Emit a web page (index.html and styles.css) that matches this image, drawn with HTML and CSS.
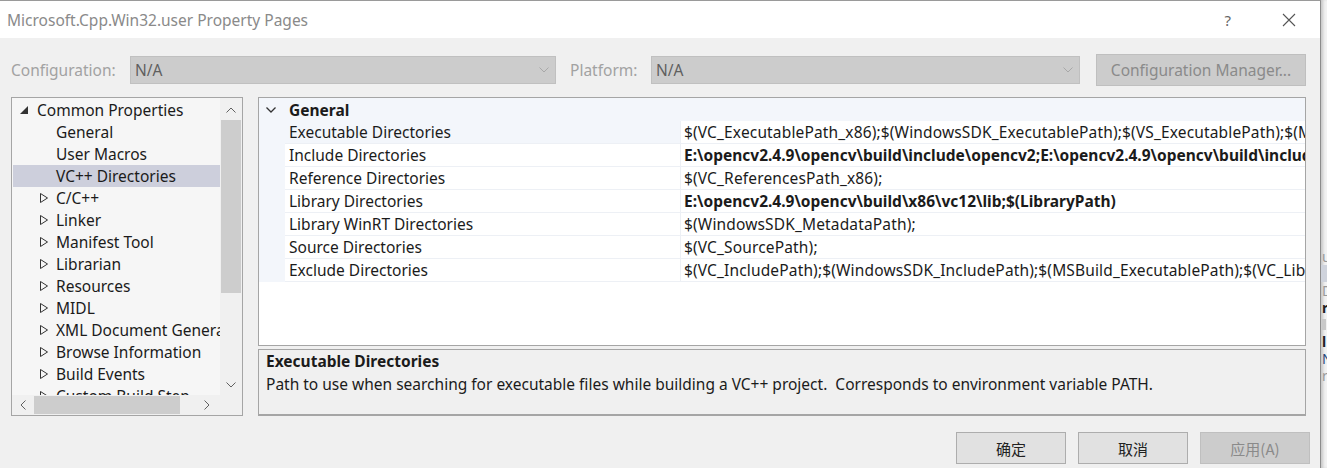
FILE: index.html
```html
<!DOCTYPE html>
<html lang="en">
<head>
    <meta charset="UTF-8">
    <title>Microsoft.Cpp.Win32.user Property Pages</title>
    <link rel="stylesheet" href="styles.css">
</head>
<body>
<div class="desktop">
    <div class="window">

        <!-- Title bar -->
        <div class="titlebar">
            <div class="title">Microsoft.Cpp.Win32.user Property Pages</div>
            <div class="title-buttons">
                <span class="help">?</span>
                <svg class="close" width="14" height="14" viewBox="0 0 14 14"><path d="M1 1 L13 13 M13 1 L1 13" stroke="#555" stroke-width="1.1" fill="none"/></svg>
            </div>
        </div>

        <!-- Configuration row -->
        <div class="config-row">
            <label class="config-label first">Configuration:</label>
            <div class="combo wide1">
                <span>N/A</span>
                <svg width="10" height="6" viewBox="0 0 10 6"><path d="M0.5 0.5 L5 5 L9.5 0.5" stroke="#a8a8a8" fill="none"/></svg>
            </div>
            <label class="config-label second">Platform:</label>
            <div class="combo wide2">
                <span>N/A</span>
                <svg width="10" height="6" viewBox="0 0 10 6"><path d="M0.5 0.5 L5 5 L9.5 0.5" stroke="#a8a8a8" fill="none"/></svg>
            </div>
            <div class="config-manager">Configuration Manager...</div>
        </div>

        <!-- Main area -->
        <div class="main">
            <!-- Tree -->
            <div class="tree">
                <div class="tree-top">
                    <div class="tree-items">
                        <div class="tree-item root">
                            <svg class="tri" width="8" height="8" viewBox="0 0 8 8"><path d="M8 0 L8 8 L0 8 Z" fill="#333"/></svg>
                            <span>Common Properties</span>
                        </div>
                        <div class="tree-item leaf">General</div>
                        <div class="tree-item leaf">User Macros</div>
                        <div class="tree-item leaf selected">VC++ Directories</div>
                        <div class="tree-item child"><svg class="tri" width="8" height="10" viewBox="0 0 8 10"><path d="M0.5 0.5 L7.5 5 L0.5 9.5 Z" fill="none" stroke="#333"/></svg><span>C/C++</span></div>
                        <div class="tree-item child"><svg class="tri" width="8" height="10" viewBox="0 0 8 10"><path d="M0.5 0.5 L7.5 5 L0.5 9.5 Z" fill="none" stroke="#333"/></svg><span>Linker</span></div>
                        <div class="tree-item child"><svg class="tri" width="8" height="10" viewBox="0 0 8 10"><path d="M0.5 0.5 L7.5 5 L0.5 9.5 Z" fill="none" stroke="#333"/></svg><span>Manifest Tool</span></div>
                        <div class="tree-item child"><svg class="tri" width="8" height="10" viewBox="0 0 8 10"><path d="M0.5 0.5 L7.5 5 L0.5 9.5 Z" fill="none" stroke="#333"/></svg><span>Librarian</span></div>
                        <div class="tree-item child"><svg class="tri" width="8" height="10" viewBox="0 0 8 10"><path d="M0.5 0.5 L7.5 5 L0.5 9.5 Z" fill="none" stroke="#333"/></svg><span>Resources</span></div>
                        <div class="tree-item child"><svg class="tri" width="8" height="10" viewBox="0 0 8 10"><path d="M0.5 0.5 L7.5 5 L0.5 9.5 Z" fill="none" stroke="#333"/></svg><span>MIDL</span></div>
                        <div class="tree-item child"><svg class="tri" width="8" height="10" viewBox="0 0 8 10"><path d="M0.5 0.5 L7.5 5 L0.5 9.5 Z" fill="none" stroke="#333"/></svg><span>XML Document Generator</span></div>
                        <div class="tree-item child"><svg class="tri" width="8" height="10" viewBox="0 0 8 10"><path d="M0.5 0.5 L7.5 5 L0.5 9.5 Z" fill="none" stroke="#333"/></svg><span>Browse Information</span></div>
                        <div class="tree-item child"><svg class="tri" width="8" height="10" viewBox="0 0 8 10"><path d="M0.5 0.5 L7.5 5 L0.5 9.5 Z" fill="none" stroke="#333"/></svg><span>Build Events</span></div>
                        <div class="tree-item child"><svg class="tri" width="8" height="10" viewBox="0 0 8 10"><path d="M0.5 0.5 L7.5 5 L0.5 9.5 Z" fill="none" stroke="#333"/></svg><span>Custom Build Step</span></div>
                    </div>
                    <div class="vscroll">
                        <svg class="arrow" width="10" height="6" viewBox="0 0 10 6"><path d="M0.5 5.5 L5 1 L9.5 5.5" stroke="#606060" fill="none"/></svg>
                        <div class="vtrack"><div class="vthumb"></div></div>
                        <svg class="arrow" width="10" height="6" viewBox="0 0 10 6"><path d="M0.5 0.5 L5 5 L9.5 0.5" stroke="#606060" fill="none"/></svg>
                    </div>
                </div>
                <div class="hscroll">
                    <svg class="harrow" width="6" height="10" viewBox="0 0 6 10"><path d="M5.5 0.5 L1 5 L5.5 9.5" stroke="#606060" fill="none"/></svg>
                    <div class="htrack"><div class="hthumb"></div></div>
                    <svg class="harrow" width="6" height="10" viewBox="0 0 6 10"><path d="M0.5 0.5 L5 5 L0.5 9.5" stroke="#606060" fill="none"/></svg>
                    <div class="corner"></div>
                </div>
            </div>

            <!-- Property grid + description -->
            <div class="right">
                <div class="grid">
                    <div class="grid-header">
                        <svg class="chev" width="10" height="6" viewBox="0 0 10 6"><path d="M0.5 0.5 L5 5 L9.5 0.5" stroke="#333" stroke-width="1.3" fill="none"/></svg>
                        <span>General</span>
                    </div>
                    <div class="grid-body">
                        <div class="gutter"></div>
                        <div class="rows">
                            <div class="row active">
                                <div class="name">Executable Directories</div>
                                <div class="value">$(VC_ExecutablePath_x86);$(WindowsSDK_ExecutablePath);$(VS_ExecutablePath);$(MSBuild_ExecutablePath);$(SystemRoot)\SysWow64;$(FxCopDir);$(PATH);</div>
                            </div>
                            <div class="row">
                                <div class="name">Include Directories</div>
                                <div class="value bold">E:\opencv2.4.9\opencv\build\include\opencv2;E:\opencv2.4.9\opencv\build\include\opencv;E:\opencv2.4.9\opencv\build\include;$(IncludePath)</div>
                            </div>
                            <div class="row">
                                <div class="name">Reference Directories</div>
                                <div class="value">$(VC_ReferencesPath_x86);</div>
                            </div>
                            <div class="row">
                                <div class="name">Library Directories</div>
                                <div class="value bold">E:\opencv2.4.9\opencv\build\x86\vc12\lib;$(LibraryPath)</div>
                            </div>
                            <div class="row">
                                <div class="name">Library WinRT Directories</div>
                                <div class="value">$(WindowsSDK_MetadataPath);</div>
                            </div>
                            <div class="row">
                                <div class="name">Source Directories</div>
                                <div class="value">$(VC_SourcePath);</div>
                            </div>
                            <div class="row">
                                <div class="name">Exclude Directories</div>
                                <div class="value">$(VC_IncludePath);$(WindowsSDK_IncludePath);$(MSBuild_ExecutablePath);$(VC_LibraryPath_x86);</div>
                            </div>
                        </div>
                    </div>
                </div>
                <div class="description">
                    <div class="desc-title">Executable Directories</div>
                    <div class="desc-text">Path to use when searching for executable files while building a VC++ project.&nbsp; Corresponds to environment variable PATH.</div>
                </div>
            </div>
        </div>

        <!-- Dialog buttons -->
        <div class="buttons">
            <div class="btn">确定</div>
            <div class="btn">取消</div>
            <div class="btn disabled">应用(A)</div>
        </div>
    </div>

    <!-- Background application showing at the right edge -->
    <div class="backdrop">
        <div class="bd-line light">u</div>
        <div class="bd-line band"></div>
        <div class="bd-line light">D</div>
        <div class="bd-line strong">r</div>
        <div class="bd-line icon"></div>
        <div class="bd-line strong">l</div>
        <div class="bd-line blue">N</div>
        <div class="bd-line light">r</div>
    </div>
</div>
</body>
</html>
```

FILE: styles.css
```css
* {
    box-sizing: border-box;
}
body {
    margin: 0;
    padding: 0;
    font-family: "Noto Sans", "Noto Sans CJK SC", sans-serif;
    font-size: 15.5px;
    color: #1b1b1b;
    background-color: #e6e6e6;
    overflow: hidden;
}
.desktop {
    display: flex;
    width: 1327px;
    height: 468px;
}
.window {
    width: 1321px;
    height: 468px;
    background-color: #f0f0f0;
    border-right: 1px solid #8c8c8c;
    border-top: 1px solid #9a9a9a;
    display: flex;
    flex-direction: column;
    flex-shrink: 0;
}

/* Title bar */
.titlebar {
    height: 37px;
    background-color: #fff;
    display: flex;
    align-items: center;
    justify-content: space-between;
    padding-left: 7px;
}
.title {
    color: #8a8a8a;
    font-size: 15.5px;
}
.title-buttons {
    display: flex;
    align-items: center;
}
.help {
    color: #666;
    font-size: 15px;
    margin-right: 51px;
}
.close {
    margin-right: 24px;
}

/* Configuration row */
.config-row {
    display: flex;
    align-items: center;
    height: 32px;
    margin-top: 16px;
    padding-left: 11px;
}
.config-label {
    color: #a2a2a2;
}
.config-label.first {
    width: 119px;
}
.config-label.second {
    width: 81px;
    margin-left: 14px;
}
.combo {
    height: 28px;
    background-color: #cccccc;
    border: 1px solid #c0c0c0;
    display: flex;
    align-items: center;
    justify-content: space-between;
    padding: 0 6px 0 4px;
    color: #5f5f5f;
}
.combo.wide1 {
    width: 426px;
}
.combo.wide2 {
    width: 429px;
}
.config-manager {
    margin-left: 16px;
    width: 210px;
    height: 32px;
    background-color: #cccccc;
    border: 1px solid #bfbfbf;
    color: #8a8a8a;
    display: flex;
    align-items: center;
    justify-content: center;
}

/* Main area */
.main {
    display: flex;
    margin-top: 11px;
    padding-left: 11px;
    height: 319px;
}
.tree {
    width: 232px;
    border: 1px solid #a5a5a5;
    background-color: #f6f6f6;
    display: flex;
    flex-direction: column;
}
.tree-top {
    display: flex;
    height: 297px;
}
.tree-items {
    width: 209px;
    overflow: hidden;
    padding-top: 1px;
    padding-left: 1px;
}
.tree-item {
    height: 22px;
    display: flex;
    align-items: center;
    white-space: nowrap;
}
.tree-item .tri {
    flex-shrink: 0;
}
.tree-item.root {
    padding-left: 7px;
}
.tree-item.root .tri {
    margin-right: 9px;
}
.tree-item.leaf {
    padding-left: 43px;
}
.tree-item.child {
    padding-left: 27px;
}
.tree-item.child .tri {
    margin-right: 8px;
}
.tree-item.selected {
    background-color: #cdcfdc;
}
.vscroll {
    width: 22px;
    background-color: #f0f0f0;
    display: flex;
    flex-direction: column;
    align-items: center;
}
.vscroll .arrow {
    margin: 9px 0 7px;
}
.vtrack {
    flex: 1;
    width: 100%;
    padding: 0 1px;
}
.vthumb {
    height: 173px;
    background-color: #cdcdcd;
}
.hscroll {
    flex: 1;
    display: flex;
    align-items: center;
    background-color: #f0f0f0;
}
.harrow {
    margin: 0 8px;
}
.htrack {
    width: 162px;
    height: 100%;
    padding: 1px 0;
}
.hthumb {
    width: 146px;
    height: 100%;
    background-color: #cdcdcd;
}
.corner {
    flex: 1;
}

/* Property grid */
.right {
    margin-left: 15px;
    width: 1048px;
    display: flex;
    flex-direction: column;
}
.grid {
    height: 249px;
    border: 1px solid #a5a5a5;
    background-color: #fff;
    overflow: hidden;
}
.grid-header {
    height: 23px;
    background-color: #f3f6fb;
    display: flex;
    align-items: center;
    font-weight: bold;
}
.grid-header .chev {
    margin: 0 13px 0 7px;
}
.grid-body {
    display: flex;
}
.gutter {
    width: 26px;
    background-color: #f3f6fb;
    flex-shrink: 0;
}
.rows {
    flex: 1;
    overflow: hidden;
}
.row {
    display: flex;
    height: 23px;
    border-bottom: 1px solid #edf0f5;
}
.row .name {
    width: 396px;
    flex-shrink: 0;
    padding-left: 4px;
    display: flex;
    align-items: center;
    border-right: 1px solid #edf0f5;
}
.row.active .name {
    background-color: #f3f6fb;
}
.row .value {
    padding-left: 3px;
    display: flex;
    align-items: center;
    white-space: nowrap;
    overflow: hidden;
    letter-spacing: 0.15px;
}
.row .value.bold {
    font-weight: bold;
    letter-spacing: 0;
}

/* Description */
.description {
    margin-top: 3px;
    flex: 1;
    border: 1px solid #a5a5a5;
    border-bottom: 2px solid #a5a5a5;
    padding: 0 7px;
}
.desc-title {
    font-weight: bold;
    height: 23px;
    line-height: 23px;
}
.desc-text {
    height: 23px;
    line-height: 23px;
}

/* Buttons */
.buttons {
    display: flex;
    justify-content: flex-end;
    gap: 12px;
    margin-top: 16px;
    padding-right: 10px;
}
.btn {
    width: 110px;
    height: 32px;
    background-color: #e1e1e1;
    border: 1px solid #adadad;
    display: flex;
    align-items: center;
    justify-content: center;
    font-family: "Noto Sans CJK SC", sans-serif;
    font-size: 15px;
    color: #222;
}
.btn.disabled {
    background-color: #cccccc;
    border-color: #bfbfbf;
    color: #8a8a8a;
}

/* Background app at right edge */
.backdrop {
    flex: 1;
    background-color: #f2f2f2;
    box-shadow: inset 3px 0 3px -1px rgba(0, 0, 0, 0.18);
    padding-top: 248px;
    font-size: 14px;
    overflow: hidden;
    white-space: nowrap;
}
.bd-line {
    height: 17px;
    line-height: 17px;
    padding-left: 1px;
    overflow: hidden;
}
.bd-line.light {
    color: #999;
}
.bd-line.band {
    background-color: #cfd3dc;
}
.bd-line.strong {
    font-weight: bold;
    color: #222;
}
.bd-line.icon {
    background-color: #c9c9c9;
    margin: 3px 1px;
    height: 11px;
}
.bd-line.blue {
    color: #2c4a7a;
}
```
